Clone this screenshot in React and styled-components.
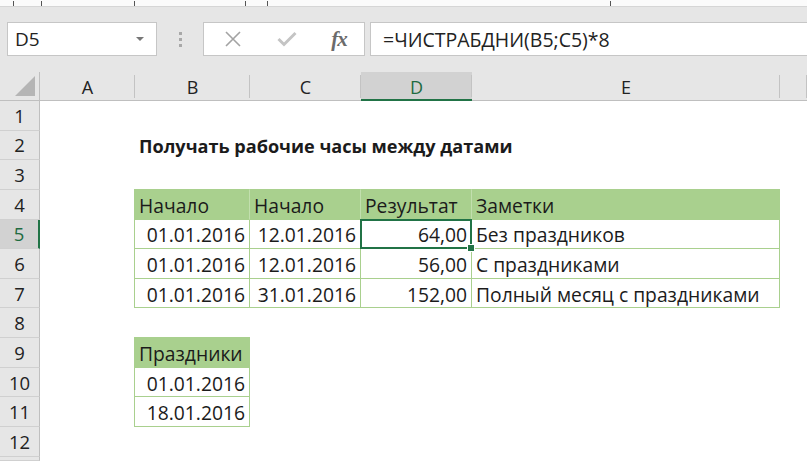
import React from "react";
import styled, { createGlobalStyle, css } from "styled-components";

const GlobalStyle = createGlobalStyle`
  html, body { margin: 0; padding: 0; background: #ffffff; }
  body { font-family: "Open Sans", "Liberation Sans", sans-serif; overflow: hidden; }
  * { box-sizing: border-box; }
`;

const GREEN = "#a9d08e";
const SEL = "#217346";

const Page = styled.div`
  width: 807px;
  height: 461px;
  display: flex;
  flex-direction: column;
  overflow: hidden;
`;

const TopStrip = styled.div`
  height: 7px;
  flex: none;
  background: #fbfbfb;
  border-bottom: 1px solid #d6d6d6;
  display: flex;
  align-items: flex-end;
`;

const StripTick = styled.span`
  width: 1px;
  height: 5px;
  background: #555;
  margin-left: ${(p) => p.$ml}px;
`;

const FormulaBand = styled.div`
  height: 65px;
  flex: none;
  background: #e6e6e6;
  display: flex;
  align-items: flex-start;
  padding: 15px 0 0 7px;
`;

const NameBox = styled.div`
  width: 150px;
  height: 34px;
  background: #fff;
  border: 1px solid #c6c6c6;
  display: flex;
  align-items: center;
  justify-content: space-between;
  padding: 0 12px 0 7px;
  font-size: 19px;
  color: #222;
`;

const Caret = styled.span`
  width: 0;
  height: 0;
  border-left: 4px solid transparent;
  border-right: 4px solid transparent;
  border-top: 4px solid #777;
`;

const Grip = styled.div`
  width: 46px;
  height: 34px;
  display: flex;
  flex-direction: column;
  align-items: center;
  justify-content: center;
  gap: 3px;
`;

const GripDot = styled.span`
  width: 3px;
  height: 3px;
  background: #a8a8a8;
`;

const ButtonsBox = styled.div`
  width: 162px;
  height: 34px;
  background: #fff;
  border: 1px solid #c6c6c6;
  display: flex;
  align-items: center;
  padding-left: 18px;
`;

const IconSlot = styled.span`
  width: ${(p) => p.$w}px;
  display: flex;
  align-items: center;
  justify-content: center;
`;

const FxText = styled.span`
  font-family: "Liberation Serif", serif;
  font-style: italic;
  font-weight: bold;
  font-size: 21px;
  color: #6b6b6b;
  letter-spacing: -1px;
  margin-left: -4px;
`;

const FormulaBox = styled.div`
  flex: 1;
  height: 34px;
  margin-left: 5px;
  background: #fff;
  border: 1px solid #c6c6c6;
  border-right: none;
  display: flex;
  align-items: center;
  padding-left: 12px;
  font-size: 19.5px;
  color: #222;
`;

const Sheet = styled.div`
  flex: 1;
  display: grid;
  grid-template-columns: 40px 95px 115px 111px 111px 308px 1fr;
  grid-template-rows: 29px repeat(12, 29.65px) 1fr;
  background: #fff;
`;

const Corner = styled.div`
  background: #e6e6e6;
  border-right: 1px solid #bfbfbf;
  border-bottom: 1px solid #bfbfbf;
  position: relative;
`;

const CornerTri = styled.span`
  position: absolute;
  right: 4px;
  bottom: 4px;
  width: 0;
  height: 0;
  border-left: 20px solid transparent;
  border-bottom: 20px solid #b5b5b5;
`;

const ColHead = styled.div`
  background: ${(p) => (p.$active ? "#d2d2d2" : "#e6e6e6")};
  border-bottom: ${(p) => (p.$active ? `2px solid ${SEL}` : "1px solid #bfbfbf")};
  position: relative;
  display: flex;
  align-items: center;
  justify-content: center;
  font-size: 18px;
  color: ${(p) => (p.$active ? "#1e6b41" : "#222")};
  padding-top: 2px;
  &::after {
    content: "";
    position: absolute;
    right: 0;
    top: 3px;
    bottom: 2px;
    width: 1px;
    background: #c3c3c3;
  }
`;

const RowHead = styled.div`
  background: ${(p) => (p.$active ? "#d2d2d2" : "#e6e6e6")};
  border-right: ${(p) => (p.$active ? `2px solid ${SEL}` : "1px solid #bfbfbf")};
  border-bottom: 1px solid #d0d0d0;
  display: flex;
  align-items: center;
  justify-content: center;
  font-size: 18.5px;
  color: ${(p) => (p.$active ? "#1e6b41" : "#222")};
`;

const Cell = styled.div`
  position: relative;
  display: flex;
  align-items: center;
  white-space: nowrap;
  font-size: 19.3px;
  color: #1b1b1b;
  padding: 2px 4px 0 4px;
  justify-content: ${(p) => (p.$right ? "flex-end" : "flex-start")};
  ${(p) => p.$bold && css`font-weight: 700; font-size: 18.1px; overflow: visible;`}
  ${(p) =>
    p.$table &&
    css`
      background: ${p.$head ? GREEN : "#fff"};
      border-right: 1px solid ${GREEN};
      border-bottom: 1px solid ${GREEN};
    `}
  ${(p) => p.$first && css`border-left: 1px solid ${GREEN}; margin-left: -1px;`}
  ${(p) => p.$top && css`border-top: 1px solid ${GREEN}; margin-top: -1px;`}
  ${(p) => p.$head && !p.$last && css`border-right-color: #c2dfae;`}
  ${(p) =>
    p.$selected &&
    css`
      &::after {
        content: "";
        position: absolute;
        left: -1px;
        top: -1px;
        right: -1px;
        bottom: -1px;
        border: 2px solid ${SEL};
        pointer-events: none;
      }
      &::before {
        content: "";
        position: absolute;
        right: -4px;
        bottom: -4px;
        width: 6px;
        height: 6px;
        background: ${SEL};
        border: 1px solid #fff;
        z-index: 2;
      }
    `}
`;

const cols = ["A", "B", "C", "D", "E", ""];

const mainRows = [
  ["01.01.2016", "12.01.2016", "64,00", "Без праздников"],
  ["01.01.2016", "12.01.2016", "56,00", "С праздниками"],
  ["01.01.2016", "31.01.2016", "152,00", "Полный месяц с праздниками"],
];

const holidays = ["01.01.2016", "18.01.2016"];

function CancelIcon() {
  return (
    <svg width="18" height="16" viewBox="0 0 18 16">
      <path d="M2 1 L16 15 M16 1 L2 15" stroke="#a3a3a3" strokeWidth="1.6" fill="none" />
    </svg>
  );
}

function CheckIcon() {
  return (
    <svg width="20" height="16" viewBox="0 0 20 16">
      <path d="M1.5 8 L7 13.5 L18.5 2" stroke="#c4c4c4" strokeWidth="3" fill="none" />
    </svg>
  );
}

function renderRow(r) {
  const cells = [];
  cells.push(<RowHead key="h" $active={r === 5}>{r}</RowHead>);
  for (let c = 0; c < 6; c++) {
    let content = null;
    let props = {};
    if (r === 2 && c === 1) {
      content = "Получать рабочие часы между датами";
      props = { $bold: true };
    } else if (r === 4 && c >= 1 && c <= 4) {
      content = ["Начало", "Начало", "Результат", "Заметки"][c - 1];
      props = { $table: true, $head: true, $top: true, $first: c === 1, $last: c === 4 };
    } else if (r >= 5 && r <= 7 && c >= 1 && c <= 4) {
      const row = mainRows[r - 5];
      content = row[c - 1];
      props = { $table: true, $right: c <= 3, $first: c === 1, $selected: r === 5 && c === 3 };
    } else if (r === 9 && c === 1) {
      content = "Праздники";
      props = { $table: true, $head: true, $top: true, $first: true, $last: true };
    } else if ((r === 10 || r === 11) && c === 1) {
      content = holidays[r - 10];
      props = { $table: true, $right: true, $first: true };
    }
    cells.push(
      <Cell key={c} {...props}>
        {content}
      </Cell>
    );
  }
  return <React.Fragment key={r}>{cells}</React.Fragment>;
}

export default function App() {
  return (
    <>
      <GlobalStyle />
      <Page>
        <TopStrip>
          <StripTick $ml={13} />
          <StripTick $ml={27} />
          <StripTick $ml={92} />
          <StripTick $ml={110} />
          <StripTick $ml={21} />
          <StripTick $ml={342} />
        </TopStrip>
        <FormulaBand>
          <NameBox>
            <span>D5</span>
            <Caret />
          </NameBox>
          <Grip>
            <GripDot />
            <GripDot />
            <GripDot />
          </Grip>
          <ButtonsBox>
            <IconSlot $w={22}><CancelIcon /></IconSlot>
            <IconSlot $w={32} />
            <IconSlot $w={22}><CheckIcon /></IconSlot>
            <IconSlot $w={32} />
            <IconSlot $w={22}><FxText>fx</FxText></IconSlot>
          </ButtonsBox>
          <FormulaBox>=ЧИСТРАБДНИ(B5;C5)*8</FormulaBox>
        </FormulaBand>
        <Sheet>
          <Corner>
            <CornerTri />
          </Corner>
          {cols.map((c, i) => (
            <ColHead key={i} $active={c === "D"}>
              {c}
            </ColHead>
          ))}
          {Array.from({ length: 12 }, (_, i) => renderRow(i + 1))}
          <RowHead />
        </Sheet>
      </Page>
    </>
  );
}
